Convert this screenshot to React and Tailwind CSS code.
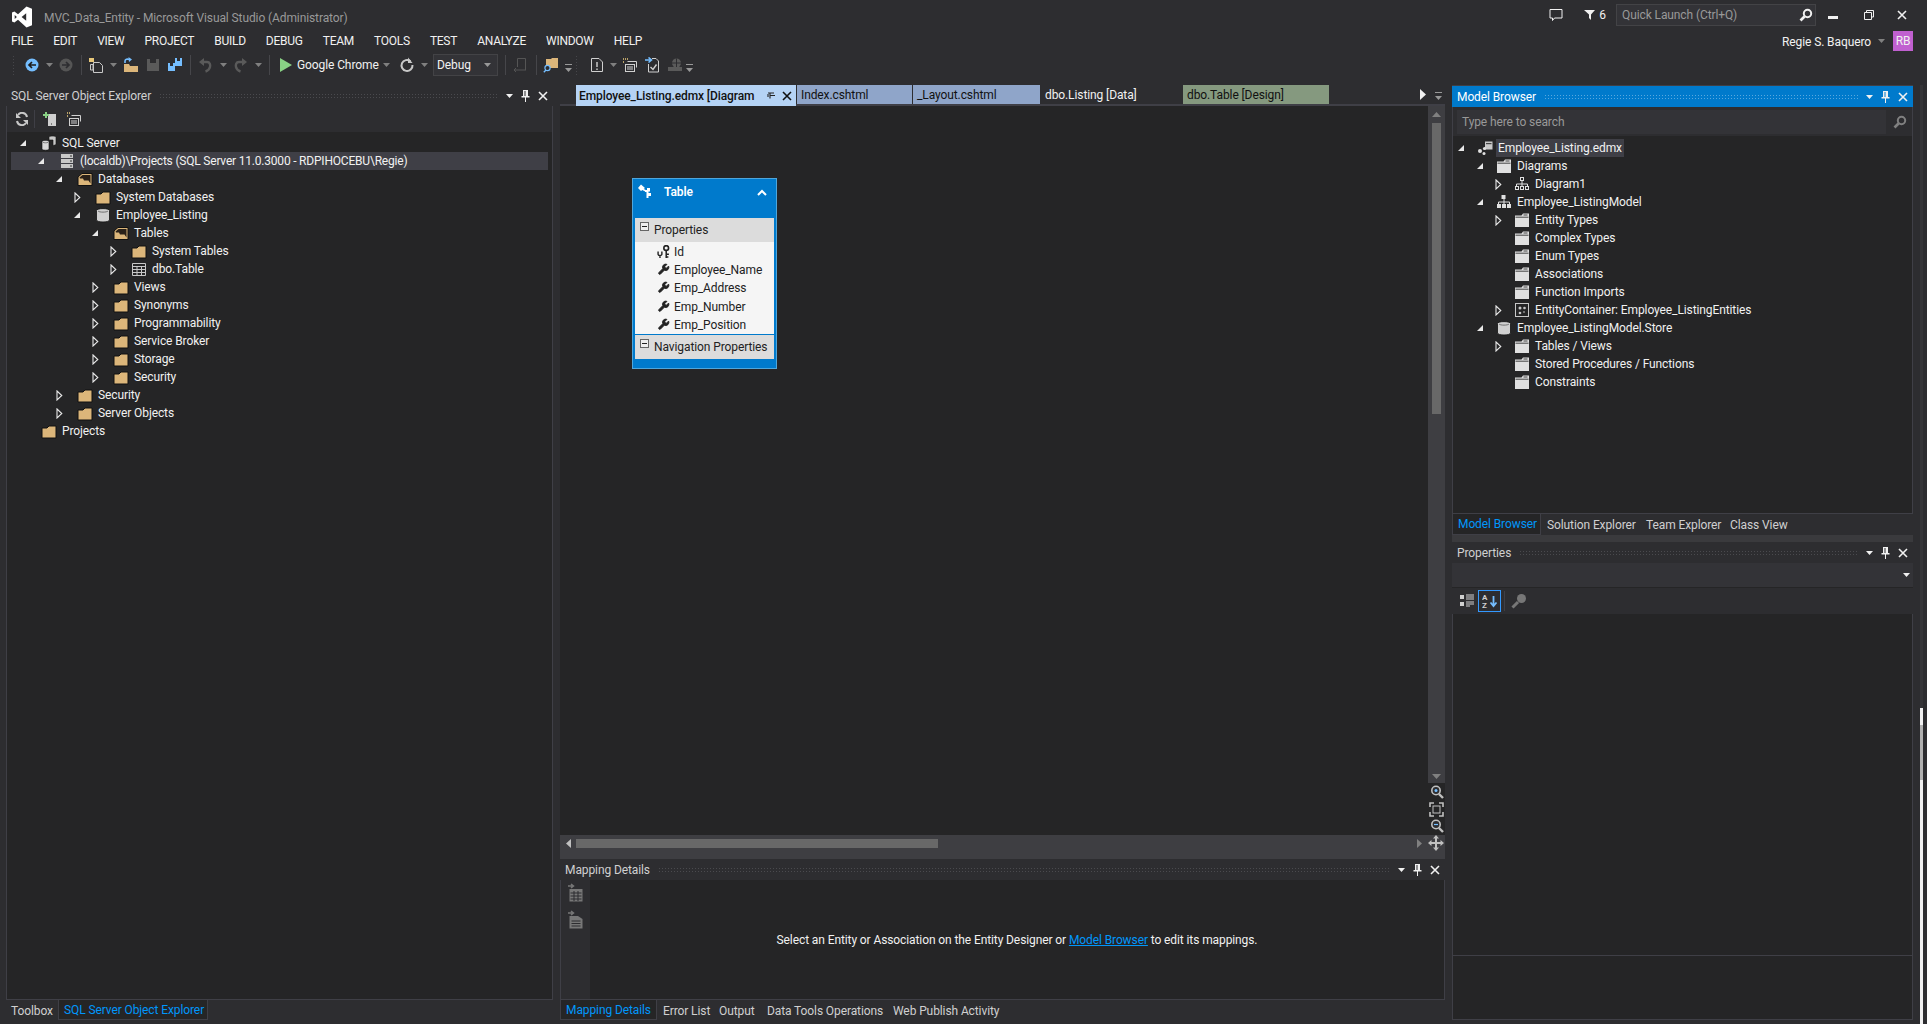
import React from "react";

const Svg = ({ s = 16, h, vb = "0 0 16 16", children, className = "" }) => (
  <svg width={s} height={h || s} viewBox={vb} className={"shrink-0 " + className}>{children}</svg>
);

const VSLogo = () => (
  <Svg s={20} h={22} vb="0 0 20 22">
    <path fillRule="evenodd" fill="#fff" d="M14.5 0.5 L20 2.8 V19.2 L14.5 21.5 L6 13.8 L2.4 16.6 L0 15.4 V6.6 L2.4 5.4 L6 8.2 Z M14.2 7.3 L9.6 11 L14.2 14.7 Z M2.7 9 V13 L4.9 11 Z" />
  </Svg>
);

const Tri = ({ c = "#999999" }) => (
  <Svg s={7} h={4} vb="0 0 7 4"><path d="M0 0H7L3.5 4Z" fill={c} /></Svg>
);
const Overflow = () => (
  <Svg s={7} h={9} vb="0 0 7 9"><path d="M0 0H7V1H0Z M0 4H7L3.5 8Z" fill="#999999" /></Svg>
);
const Pin = ({ c = "#f1f1f1" }) => (
  <Svg s={9} h={13} vb="0 0 9 13"><path d="M2 1H7V7H8.5V8.5H5V13H4V8.5H0.5V7H2Z M3.5 2V7H4.5V2Z" fill={c} fillRule="evenodd" /></Svg>
);
const Close = ({ c = "#f1f1f1", s = 10 }) => (
  <Svg s={s} vb="0 0 10 10"><path d="M1 1L9 9M9 1L1 9" stroke={c} strokeWidth="1.6" /></Svg>
);

const ArrowOpen = () => (
  <Svg s={8} vb="0 0 8 8"><path d="M7 1V7H1Z" fill="#e8e8e8" /></Svg>
);
const ArrowClosed = () => (
  <Svg s={7} h={11} vb="0 0 7 11"><path d="M1 1L5.8 5.5L1 10Z" fill="none" stroke="#e8e8e8" strokeWidth="1.1" /></Svg>
);

const FolderTan = () => (
  <Svg><path d="M1 5H6L8 3H15V15H1Z" fill="#dcb67a" stroke="#111" strokeWidth="1" /></Svg>
);
const FolderOpen = () => (
  <Svg>
    <path d="M1 6L5 2.5H15V14.5H1Z" fill="#dcb67a" stroke="#111" />
    <path d="M2.5 6.5L5.5 4H13.5V12.5L11.5 9.5H7L6 7.5H3Z" fill="#2a2118" />
  </Svg>
);
const FolderWhite = () => (
  <Svg>
    <path d="M1 3.5H7.5L9 1.5H15V15H1Z" fill="#e0e0e0" />
    <path d="M1.5 5.2H14.5" stroke="#333" strokeWidth="0.9" />
    <path d="M9.5 3H13.5" stroke="#333" strokeWidth="0.9" />
  </Svg>
);
const Cylinder = ({ c = "#d0d0d0" }) => (
  <Svg>
    <path d="M1.5 3.5C1.5 1 14.5 1 14.5 3.5V13C14.5 15.6 1.5 15.6 1.5 13Z" fill={c} stroke="#111" strokeWidth="0.8" />
    <path d="M3 4C4 5.5 12 5.5 13 4" fill="none" stroke="#666" strokeWidth="0.9" />
  </Svg>
);
const SqlServer = () => (
  <Svg>
    <path d="M8 2C8 0.8 15 0.8 15 2V9C15 10 13 10.4 12 10.4V5H8Z" fill="#c8c8c8" stroke="#111" strokeWidth="0.6" />
    <path d="M1 6.5C1 5 8 5 8 6.5V14C8 15.6 1 15.6 1 14Z" fill="#d8d8d8" stroke="#111" strokeWidth="0.6" />
    <path d="M2 7.3C3 8 6 8 7 7.3" stroke="#555" fill="none" strokeWidth="0.7" />
  </Svg>
);
const ServerStack = () => (
  <Svg>
    <rect x="2" y="1" width="12" height="4" fill="#c8c8c8" />
    <rect x="2" y="6" width="12" height="4" fill="#c8c8c8" />
    <rect x="2" y="11" width="12" height="4" fill="#c8c8c8" />
    <rect x="11" y="2.5" width="2" height="1" fill="#333" />
    <rect x="11" y="7.5" width="2" height="1" fill="#333" />
    <rect x="11" y="12.5" width="2" height="1" fill="#333" />
  </Svg>
);
const GridTable = () => (
  <Svg>
    <path d="M1.5 2.5H14.5V14.5H1.5Z M1.5 5.5H14.5 M1.5 8.5H14.5 M1.5 11.5H14.5 M6 5.5V14.5 M10.5 5.5V14.5" fill="none" stroke="#c8c8c8" />
  </Svg>
);
const Hier = ({ filled = false }) => (
  <Svg>
    <rect x={filled ? 6 : 6.5} y="1.5" width="3" height="3" fill={filled ? "#e0e0e0" : "none"} stroke="#e0e0e0" />
    <path d="M8 4.5V8M2.5 10.5V8H13.5V10.5M8 8V10.5" fill="none" stroke="#e0e0e0" />
    <rect x="1.5" y="10.5" width="3" height="3" fill={filled ? "#e0e0e0" : "none"} stroke="#e0e0e0" />
    <rect x="6.5" y="10.5" width="3" height="3" fill={filled ? "#e0e0e0" : "none"} stroke="#e0e0e0" />
    <rect x="11.5" y="10.5" width="3" height="3" fill={filled ? "#e0e0e0" : "none"} stroke="#e0e0e0" />
  </Svg>
);
const Edmx = () => (
  <Svg>
    <rect x="8" y="1.5" width="7.5" height="8" fill="#c8c8c8" />
    <rect x="9" y="3" width="5.5" height="1.2" fill="#444" />
    <circle cx="3" cy="11" r="2" fill="#e0e0e0" />
    <circle cx="7.5" cy="8.5" r="1.6" fill="#e0e0e0" />
    <circle cx="7" cy="13.5" r="1.5" fill="#e0e0e0" />
  </Svg>
);
const Container = () => (
  <Svg>
    <rect x="1.5" y="1.5" width="13" height="13" fill="none" stroke="#c8c8c8" />
    <circle cx="6" cy="6" r="1.5" fill="#c8c8c8" />
    <circle cx="10.5" cy="6" r="1.3" fill="#c8c8c8" />
    <circle cx="6" cy="11" r="1.3" fill="#c8c8c8" />
    <circle cx="10" cy="10" r="1.1" fill="#888" />
  </Svg>
);
const Search = ({ c = "#f1f1f1", s = 14 }) => (
  <Svg s={s} vb="0 0 14 14">
    <circle cx="8.5" cy="5.5" r="3.7" fill="none" stroke={c} strokeWidth="2" />
    <path d="M5.5 8.5L1.5 12.5" stroke={c} strokeWidth="2.6" />
  </Svg>
);

const icons = {
  tan: FolderTan, open: FolderOpen, white: FolderWhite, db: Cylinder, sql: SqlServer, server: ServerStack,
  grid: GridTable, hier: Hier, hierF: () => <Hier filled />, edmx: Edmx, cont: Container,
};

const leftTree = [
  { pad: "pl-[7px]", a: "open", i: "sql", t: "SQL Server" },
  { pad: "pl-[25px]", a: "open", i: "server", t: "(localdb)\\Projects (SQL Server 11.0.3000 - RDPIHOCEBU\\Regie)", sel: true },
  { pad: "pl-[43px]", a: "open", i: "open", t: "Databases" },
  { pad: "pl-[61px]", a: "closed", i: "tan", t: "System Databases" },
  { pad: "pl-[61px]", a: "open", i: "db", t: "Employee_Listing" },
  { pad: "pl-[79px]", a: "open", i: "open", t: "Tables" },
  { pad: "pl-[97px]", a: "closed", i: "tan", t: "System Tables" },
  { pad: "pl-[97px]", a: "closed", i: "grid", t: "dbo.Table" },
  { pad: "pl-[79px]", a: "closed", i: "tan", t: "Views" },
  { pad: "pl-[79px]", a: "closed", i: "tan", t: "Synonyms" },
  { pad: "pl-[79px]", a: "closed", i: "tan", t: "Programmability" },
  { pad: "pl-[79px]", a: "closed", i: "tan", t: "Service Broker" },
  { pad: "pl-[79px]", a: "closed", i: "tan", t: "Storage" },
  { pad: "pl-[79px]", a: "closed", i: "tan", t: "Security" },
  { pad: "pl-[43px]", a: "closed", i: "tan", t: "Security" },
  { pad: "pl-[43px]", a: "closed", i: "tan", t: "Server Objects" },
  { pad: "pl-[7px]", i: "tan", t: "Projects" },
];

const rightTree = [
  { pad: "pl-[3px]", a: "open", i: "edmx", t: "Employee_Listing.edmx", sel: true },
  { pad: "pl-[22px]", a: "open", i: "white", t: "Diagrams" },
  { pad: "pl-[40px]", a: "closed", i: "hier", t: "Diagram1" },
  { pad: "pl-[22px]", a: "open", i: "hierF", t: "Employee_ListingModel" },
  { pad: "pl-[40px]", a: "closed", i: "white", t: "Entity Types" },
  { pad: "pl-[40px]", i: "white", t: "Complex Types" },
  { pad: "pl-[40px]", i: "white", t: "Enum Types" },
  { pad: "pl-[40px]", i: "white", t: "Associations" },
  { pad: "pl-[40px]", i: "white", t: "Function Imports" },
  { pad: "pl-[40px]", a: "closed", i: "cont", t: "EntityContainer: Employee_ListingEntities" },
  { pad: "pl-[22px]", a: "open", i: "db", t: "Employee_ListingModel.Store" },
  { pad: "pl-[40px]", a: "closed", i: "white", t: "Tables / Views" },
  { pad: "pl-[40px]", i: "white", t: "Stored Procedures / Functions" },
  { pad: "pl-[40px]", i: "white", t: "Constraints" },
];

const Row = ({ r, gapL, gapT }) => {
  const I = icons[r.i];
  const isLeft = gapL === "ml-[13px]";
  return (
    <div className={"flex items-center h-[18px] " + r.pad + (r.sel && isLeft ? " bg-[#3f3f46]" : "")}>
      <div className="w-[10px] flex justify-center">
        {r.a === "open" ? <ArrowOpen /> : r.a === "closed" ? <ArrowClosed /> : null}
      </div>
      <div className={gapL}><I /></div>
      <span className={gapT + " px-[2px] h-[18px] leading-[18px] whitespace-nowrap " + (r.sel && !isLeft ? "bg-[#3f3f46]" : "") + (r.sel && isLeft ? "tracking-[-0.2px]" : "")}>{r.t}</span>
    </div>
  );
};

const PanelHead = ({ title, active }) => (
  <div className={"h-[21px] flex items-center shrink-0 pl-[5px] pr-[5px] " + (active ? "bg-[#007acc] text-white" : "bg-[#2d2d30] text-[#d0d0d0]")}>
    <span className="whitespace-nowrap pt-px">{title}</span>
    <div className={"flex-1 h-[5px] mx-[8px] bg-[length:3px_3px] " + (active ? "bg-[radial-gradient(#59a8de_1px,transparent_1px)]" : "bg-[radial-gradient(#4a4a4e_1px,transparent_1px)]")} />
    <div className="flex items-center gap-[8px]">
      <Tri c="#f1f1f1" />
      <Pin />
      <Close />
    </div>
  </div>
);

const ToolSep = ({ c = "w-[14px]" }) => (
  <div className={c + " flex justify-center"}><div className="w-px h-[20px] bg-[#46464a]" /></div>
);
const Grip = () => <div className="w-[4px] h-[20px] bg-[radial-gradient(#46464a_1px,transparent_1px)] bg-[length:3px_3px]" />;
const DD = ({ c = "w-[18px]" }) => <div className={c + " flex justify-center"}><Tri c="#808080" /></div>;

const Toolbar = () => (
  <div className="h-[26px] flex items-center pl-[12px] shrink-0 mb-[7px]">
    <div className="w-[12px]"><Grip /></div>
    <Svg><circle cx="8" cy="8" r="6.5" fill="#75beff" /><path d="M12 8H5M8 5L5 8L8 11" stroke="#1e1e1e" strokeWidth="1.7" fill="none" /></Svg>
    <DD />
    <Svg><circle cx="8" cy="8" r="6.5" fill="#555" /><path d="M4 8H11M8 5L11 8L8 11" stroke="#2d2d30" strokeWidth="1.7" fill="none" /></Svg>
    <ToolSep />
    <Svg>
      <path d="M5.5 5.5H11.5L14.5 8.5V15.5H5.5Z" fill="none" stroke="#c8c8c8" />
      <path d="M2.5 7.5H5V13H2.5Z" fill="none" stroke="#c8c8c8" />
      <rect x="1" y="1" width="5" height="4" fill="#e8c87a" />
    </Svg>
    <DD c="w-[19px]" />
    <Svg>
      <path d="M1 7H6L7 9H15V15H1Z" fill="#dcb67a" />
      <path d="M2 6V4C2 2.5 4 1.5 7 2.5" fill="none" stroke="#75beff" strokeWidth="1.6" />
      <path d="M5.5 0L9 2.5L6 5Z" fill="#75beff" />
    </Svg>
    <div className="w-[6px]" />
    <Svg><path d="M2 2H5V6H11V2H14V14H2Z" fill="#5a5a5a" /></Svg>
    <div className="w-[6px]" />
    <Svg>
      <path d="M8 1H15V9H8Z" fill="#75beff" />
      <path d="M1 6H8V14H1Z" fill="#75beff" />
      <rect x="10" y="1" width="3" height="3" fill="#2d2d30" />
      <rect x="3" y="6" width="3" height="3" fill="#2d2d30" />
    </Svg>
    <ToolSep c="w-[14px]" />
    <Svg><path d="M6 5H10C13 5 13.5 8 13 10C12.5 12 10 14 8.5 14.5" fill="none" stroke="#5a5a5a" strokeWidth="2.4" /><path d="M2 5L7 1V9Z" fill="#5a5a5a" /></Svg>
    <DD c="w-[20px]" />
    <Svg><path d="M10 5H6C3 5 2.5 8 3 10C3.5 12 6 14 7.5 14.5" fill="none" stroke="#5a5a5a" strokeWidth="2.4" /><path d="M14 5L9 1V9Z" fill="#5a5a5a" /></Svg>
    <DD c="w-[19px]" />
    <ToolSep c="w-[2px]" />
    <div className="w-[8px]" />
    <Svg vb="0 0 16 16"><path d="M2 1L14 8L2 15Z" fill="#89d185" /></Svg>
    <span className="ml-[3px] text-[#f1f1f1] w-[84px] whitespace-nowrap">Google Chrome</span>
    <DD c="w-[10px]" />
    <div className="w-[8px]" />
    <Svg><path d="M11.5 4.2A5.5 5.5 0 1 0 13.5 8" fill="none" stroke="#c8c8c8" strokeWidth="2" /><path d="M9 0.5V6H13.5Z" fill="#c8c8c8" /></Svg>
    <DD c="w-[18px]" />
    <div className="w-[65px] h-[22px] bg-[#333337] border border-[#434346] flex items-center justify-between pl-[3px] pr-[6px] text-[#f1f1f1]">
      Debug <Tri c="#999999" />
    </div>
    <ToolSep c="w-[14px]" />
    <Svg><path d="M5.5 1.5H13.5V13M5.5 1.5V10" fill="none" stroke="#555" /><path d="M2 13H14M2 13L4 11M2 13L4 15" fill="none" stroke="#555" /></Svg>
    <div className="w-[7px]" />
    <ToolSep c="w-[2px]" />
    <div className="w-[6px]" />
    <Svg>
      <path d="M3 2H8L9 1H15V11H3Z" fill="#dcb67a" />
      <circle cx="4.5" cy="11" r="2.6" fill="#2d2d30" stroke="#75beff" strokeWidth="1.2" />
      <path d="M3 13L0.8 15.2" stroke="#75beff" strokeWidth="1.4" />
    </Svg>
    <div className="w-[7px] ml-[6px] flex items-end h-[16px]"><Overflow /></div>
    <div className="w-[3px]" />
    <Grip />
    <div className="w-[10px]" />
    <Svg><path d="M2.5 1.5H10L13.5 5V14.5H2.5Z" fill="none" stroke="#d0d0d0" /><path d="M8 5V10M8 11.5V13" stroke="#d0d0d0" strokeWidth="1.4" /></Svg>
    <DD c="w-[17px]" />
    <Svg>
      <path d="M1 2H6M1 5H3" stroke="#e8c87a" strokeWidth="1.6" strokeDasharray="1 1" />
      <path d="M5.5 4.5H14.5V10.5" fill="none" stroke="#d0d0d0" />
      <rect x="3.5" y="7.5" width="9" height="7" fill="none" stroke="#d0d0d0" />
      <path d="M5 10H11M5 12H11" stroke="#d0d0d0" />
    </Svg>
    <div className="w-[6px]" />
    <Svg>
      <path d="M1 3H7M4.5 0.5L7.5 3L4.5 5.5" stroke="#75beff" strokeWidth="1.6" fill="none" />
      <path d="M8 1.5H12L14.5 4V15H4.5V7" fill="none" stroke="#d0d0d0" />
      <path d="M6.5 10L9 12.5L12.5 7.5" fill="none" stroke="#d0d0d0" strokeWidth="1.4" />
    </Svg>
    <div className="w-[7px]" />
    <Svg>
      <circle cx="9.5" cy="6" r="4.5" fill="#5a5a5a" />
      <rect x="1" y="10" width="14" height="4" fill="#5a5a5a" />
      <path d="M9.5 1.5V10M5 6H14" stroke="#2d2d30" />
    </Svg>
    <div className="w-[10px] flex items-end h-[16px] justify-end"><Overflow /></div>
  </div>
);

const Wrench = ({ s = 13 }) => (
  <Svg s={s} vb="0 0 24 24">
    <path fill="#222" stroke="#222" strokeWidth="1.5" d="M14.7 6.3a1 1 0 0 0 0 1.4l1.6 1.6a1 1 0 0 0 1.4 0l3.77-3.77a6 6 0 0 1-7.94 7.94l-6.91 6.91a2.12 2.12 0 0 1-3-3l6.91-6.91a6 6 0 0 1 7.94-7.94l-3.76 3.76z" />
  </Svg>
);
const KeyIcon = () => (
  <Svg s={13} vb="0 0 12 12">
    <circle cx="8.5" cy="2.8" r="2.2" fill="none" stroke="#222" strokeWidth="1.5" />
    <path d="M8.5 5V12M8.5 8.5H11M8.5 11H10.5" stroke="#222" strokeWidth="1.4" />
    <path d="M1 6V8.5C1 10 4.5 10 4.5 8.5V6M2.75 9.5V12" stroke="#222" strokeWidth="1.3" fill="none" />
  </Svg>
);
const MinusBox = () => (
  <div className="w-[9px] h-[9px] border border-[#666] bg-[#eee] flex items-center justify-center shrink-0">
    <div className="w-[5px] h-px bg-[#222]" />
  </div>
);

const EntityCard = () => (
  <div className="absolute left-[72px] top-[72px] w-[145px] h-[191px] border border-[#4ea6dc] bg-[#007acc] text-[#222]">
    <div className="h-[39px] flex items-start pt-[4px] pl-[5px] pr-[9px] text-white font-semibold">
      <Svg s={15} vb="0 0 15 15">
        <path d="M0 5L3 1.5L7 5L3 8Z M7 7H9V5H12V8.5H10.5V10H13V13H10.5V15H8.5V9H7Z" fill="#fff" />
        <path d="M3 5.5L8 8" stroke="#fff" strokeWidth="1.4" />
      </Svg>
      <span className="ml-[11px] flex-1 leading-[18px]">Table</span>
      <Svg s={10} vb="0 0 10 10" className="mt-[5px]"><path d="M1 7L5 3L9 7" stroke="#fff" strokeWidth="2" fill="none" /></Svg>
    </div>
    <div className="mx-[2px] bg-[#dcdcdc] h-[24px] flex items-start pl-[5px]">
      <div className="mt-[4px]"><MinusBox /></div>
      <span className="ml-[5px] leading-[24px]">Properties</span>
    </div>
    <div className="mx-[2px] bg-[#f5f5f5] h-[92px]">
      {[["Id", true], ["Employee_Name"], ["Emp_Address"], ["Emp_Number"], ["Emp_Position"]].map(([t, k]) => (
        <div key={t} className="h-[18.4px] flex items-center pl-[22px]">
          {k ? <KeyIcon /> : <Wrench />}
          <span className="ml-[4px] pt-px">{t}</span>
        </div>
      ))}
    </div>
    <div className="h-px" />
    <div className="mx-[2px] bg-[#dcdcdc] h-[24px] flex items-start pl-[5px]">
      <div className="mt-[4px]"><MinusBox /></div>
      <span className="ml-[5px] leading-[24px] whitespace-nowrap">Navigation Properties</span>
    </div>
  </div>
);

const BottomTab = ({ t, active, c = "" }) => (
  <div className={"h-[20px] whitespace-nowrap " + c + (active ? " leading-[20px] text-[#0097fb] bg-[#252526] border-x border-b border-[#3f3f46]" : " leading-[22px] text-[#d0d0d0]")}>{t}</div>
);

const TableIconSmall = () => (
  <Svg s={16} h={20} vb="0 0 16 20">
    <path d="M0 3H5M3 1L5.5 3L3 5" stroke="#777" strokeWidth="1.5" fill="none" />
    <rect x="1.5" y="6" width="13" height="12.5" fill="#777" />
    <path d="M2.5 10H13.5M2.5 13H13.5M2.5 16H13.5M6 8V18M10 8V18" stroke="#2d2d30" />
  </Svg>
);
const ListIconSmall = () => (
  <Svg s={16} h={20} vb="0 0 16 20">
    <path d="M0 3H5M3 1L5.5 3L3 5" stroke="#777" strokeWidth="1.5" fill="none" />
    <path d="M1.5 6H10L14.5 9V18.5H1.5Z" fill="#777" />
    <path d="M3.5 11H12.5M3.5 13.5H12.5M3.5 16H12.5" stroke="#2d2d30" />
  </Svg>
);

export default function App() {
  return (
    <div className="w-[1927px] h-[1024px] overflow-hidden bg-[#2d2d30] flex flex-col text-[12px] leading-[16px] tracking-[-0.1px] text-[#f1f1f1] font-[family-name:'Roboto',sans-serif]">
      {/* title */}
      <div className="h-[30px] flex items-center shrink-0 pl-[12px]">
        <div className="mt-[4px]"><VSLogo /></div>
        <span className="ml-[12px] mt-[6px] text-[#999999] whitespace-nowrap">MVC_Data_Entity - Microsoft Visual Studio (Administrator)</span>
        <div className="ml-auto flex items-center">
          <Svg s={14} vb="0 0 14 14"><path d="M1 1.5H13V10H5.5L3.5 12.5V10H1Z" fill="none" stroke="#f1f1f1" /></Svg>
          <div className="ml-[21px] flex items-center text-[#f1f1f1]">
            <Svg s={12} vb="0 0 12 12"><path d="M0 1H11L7 5.5V11L5 9V5.5Z" fill="#f1f1f1" /></Svg>
            <span className="ml-[3px]">6</span>
          </div>
          <div className="ml-[10px] w-[200px] h-[22px] bg-[#333337] border border-[#434346] flex items-center justify-between pl-[5px] pr-[2px] text-[#999999]">
            Quick Launch (Ctrl+Q) <Search />
          </div>
          <div className="w-[111px] flex items-center">
            <div className="ml-[12px] w-[10px] h-[3px] bg-[#f1f1f1] mt-[5px]" />
            <Svg s={10} vb="0 0 10 10" className="ml-[26px]"><path d="M2.5 2.5V0.5H9.5V7H7.5M0.5 2.5H7.5V9.5H0.5Z" fill="none" stroke="#f1f1f1" /></Svg>
            <div className="ml-[23px]"><Close /></div>
          </div>
        </div>
      </div>
      {/* menu */}
      <div className="h-[22px] flex items-center shrink-0 pl-[1px] pr-[14px]">
        {["FILE", "EDIT", "VIEW", "PROJECT", "BUILD", "DEBUG", "TEAM", "TOOLS", "TEST", "ANALYZE", "WINDOW", "HELP"].map((m) => (
          <span key={m} className="px-[10px] text-[#f1f1f1] tracking-[-0.25px]">{m}</span>
        ))}
        <div className="ml-auto flex items-center">
          <span className="pt-px">Regie S. Baquero</span>
          <div className="ml-[7px]"><Tri c="#808080" /></div>
          <div className="ml-[8px] w-[20px] h-[20px] bg-[#c060d0] flex items-center justify-center text-[#f1f1f1]">RB</div>
        </div>
      </div>
      <Toolbar />

      {/* main */}
      <div className="flex-1 flex pl-[6px] min-h-0 pb-[4px]">
        {/* left */}
        <div className="w-[547px] flex flex-col shrink-0">
          <PanelHead title="SQL Server Object Explorer" />
          <div className="h-[26px] flex items-center pl-[8px] border-x border-[#3f3f46] shrink-0 gap-[5px]">
            <Svg s={14} vb="0 0 14 14"><path d="M12 5A5 5 0 0 0 3 3M2 9A5 5 0 0 0 11 11" fill="none" stroke="#c8c8c8" strokeWidth="2" /><path d="M1 1V6H6Z M13 13V8H8Z" fill="#c8c8c8" /></Svg>
            <div className="w-px h-[18px] bg-[#3f3f46]" />
            <div className="ml-[2px]"><Svg>
              <path d="M6 3H14V15H6Z" fill="#d0d0d0" /><path d="M9 13H10" stroke="#333" />
              <path d="M1 4H7M4 1V7" stroke="#89d185" strokeWidth="2" />
            </Svg></div>
            <div className="ml-[3px]"><Svg>
              <path d="M1 2H5M1 5H3" stroke="#e8c87a" strokeWidth="1.6" strokeDasharray="1 1" />
              <path d="M5.5 4.5H14.5V10.5" fill="none" stroke="#d0d0d0" />
              <rect x="3.5" y="7.5" width="9" height="7" fill="none" stroke="#d0d0d0" />
              <path d="M5 10H11M5 12H11" stroke="#d0d0d0" />
            </Svg></div>
          </div>
          <div className="flex-1 bg-[#252526] border border-[#3f3f46] border-t-0 px-[4px] pt-[2px]">
            {leftTree.map((r, i) => <Row key={i} r={r} gapL="ml-[13px]" gapT="ml-[3px]" />)}
          </div>
          <div className="h-[20px] flex shrink-0">
            <BottomTab t="Toolbox" c="pl-[5px] w-[52px]" />
            <BottomTab t="SQL Server Object Explorer" active c="pl-[5px] w-[150px]" />
          </div>
        </div>

        {/* center */}
        <div className="w-[885px] ml-[7px] flex flex-col shrink-0">
          <div className="h-[21px] flex shrink-0 border-b-2 border-[#3f3f46] pl-[16px] relative">
            <div className="w-[220px] h-[21px] bg-[#b5d3f5] text-[#111] font-medium flex items-center pl-[3px] pr-[4px] z-10">
              <span className="w-[177px] overflow-hidden whitespace-nowrap">Employee_Listing.edmx [Diagram1]</span>
              <div className="ml-[12px]"><Svg s={9} vb="0 0 9 9"><path d="M3 1.5V7.5M3 4.5H8M1 3V6M1 2H7" stroke="#222" strokeWidth="1.1" fill="none" /></Svg></div>
              <div className="ml-[6px]"><Close c="#111" /></div>
            </div>
            <div className="w-[115px] h-[19px] ml-px bg-[#8fa5c9] text-[#111] pl-[4px] leading-[21px]">Index.cshtml</div>
            <div className="w-[127px] h-[19px] ml-px bg-[#8fa5c9] text-[#111] pl-[4px] leading-[21px]">_Layout.cshtml</div>
            <div className="w-[143px] h-[19px] text-[#f1f1f1] pl-[5px] leading-[21px]">dbo.Listing [Data]</div>
            <div className="w-[146px] h-[19px] bg-[#85997f] text-[#111] pl-[4px] leading-[21px]">dbo.Table [Design]</div>
            <div className="ml-auto flex items-start pt-[4px] pr-[3px] gap-[9px]">
              <Svg s={6} h={11} vb="0 0 6 11"><path d="M0 0L6 5.5L0 11Z" fill="#f1f1f1" /></Svg>
              <div className="mt-[3px]"><Overflow /></div>
            </div>
          </div>
          {/* canvas + vscroll */}
          <div className="flex-1 flex min-h-0">
            <div className="flex-1 bg-[#252526] relative">
              <EntityCard />
            </div>
            <div className="w-[17px] flex flex-col shrink-0">
              <div className="flex-1 bg-[#3e3e42] flex flex-col items-center">
                <div className="h-[17px] flex items-center justify-center"><Svg s={9} h={5} vb="0 0 9 5"><path d="M0 5L4.5 0L9 5Z" fill="#808080" /></Svg></div>
                <div className="w-[9px] h-[291px] bg-[#686868]" />
                <div className="mt-auto h-[14px] flex items-center justify-center"><Svg s={9} h={5} vb="0 0 9 5"><path d="M0 0H9L4.5 5Z" fill="#808080" /></Svg></div>
              </div>
              <div className="h-[52px] bg-[#252526] flex flex-col items-center justify-between py-[2px] shrink-0">
                <Svg s={14} vb="0 0 14 14"><circle cx="6" cy="5.5" r="4.2" fill="#2d2d30" stroke="#c0c0c0" strokeWidth="1.6" /><path d="M9 9L13 13" stroke="#c0c0c0" strokeWidth="2.4" /><circle cx="6" cy="5.5" r="1.5" fill="#75beff" /></Svg>
                <Svg s={15} vb="0 0 15 15"><path d="M1 5V1H5M10 1H14V5M14 10V14H10M5 14H1V10" fill="none" stroke="#c0c0c0" strokeWidth="1.6" /><rect x="4" y="4" width="7" height="7" fill="none" stroke="#c0c0c0" /></Svg>
                <Svg s={14} vb="0 0 14 14"><circle cx="6" cy="5.5" r="4.2" fill="#2d2d30" stroke="#c0c0c0" strokeWidth="1.6" /><path d="M9 9L13 13" stroke="#c0c0c0" strokeWidth="2.4" /><path d="M4 5.5H8" stroke="#75beff" strokeWidth="1.2" /></Svg>
              </div>
            </div>
          </div>
          {/* hscroll */}
          <div className="h-[24px] bg-[#3e3e42] shrink-0 flex items-start">
            <div className="h-[16px] flex items-center w-full">
              <div className="w-[16px] flex justify-center"><Svg s={5} h={9} vb="0 0 5 9"><path d="M5 0V9L0 4.5Z" fill="#c0c0c0" /></Svg></div>
              <div className="w-[362px] h-[9px] bg-[#686868]" />
              <div className="ml-auto mr-[6px]"><Svg s={5} h={9} vb="0 0 5 9"><path d="M0 0V9L5 4.5Z" fill="#808080" /></Svg></div>
              <div className="mr-px"><Svg s={16} vb="0 0 16 16"><path d="M8 0L11 3.5H9V7H12.5V5L16 8L12.5 11V9H9V12.5H11L8 16L5 12.5H7V9H3.5V11L0 8L3.5 5V7H7V3.5H5Z" fill="#c0c0c0" /></Svg></div>
            </div>
          </div>
          <PanelHead title="Mapping Details" />
          <div className="h-[120px] flex bg-[#252526] border-x border-[#3f3f46] border-b shrink-0">
            <div className="w-[29px] bg-[#2d2d30] flex flex-col items-center pt-[3px] gap-[7px] shrink-0">
              <TableIconSmall />
              <ListIconSmall />
            </div>
            <div className="flex-1 flex items-center justify-center">
              <span>Select an Entity or Association on the Entity Designer or <span className="text-[#0097fb] underline">Model Browser</span> to edit its mappings.</span>
            </div>
          </div>
          <div className="h-[20px] flex shrink-0">
            <BottomTab t="Mapping Details" active c="pl-[5px] w-[97px]" />
            <BottomTab t="Error List" c="pl-[6px] w-[62px]" />
            <BottomTab t="Output" c="w-[48px]" />
            <BottomTab t="Data Tools Operations" c="w-[126px]" />
            <BottomTab t="Web Publish Activity" />
          </div>
        </div>

        {/* right */}
        <div className="w-[461px] ml-[7px] flex flex-col shrink-0">
          <div className="h-px bg-[#3f3f46] shrink-0" />
          <PanelHead title="Model Browser" active />
          <div className="h-[29px] flex items-center pl-[4px] border-x border-[#3f3f46] shrink-0">
            <div className="w-[429px] h-[24px] bg-[#333337] pl-[5px] leading-[25px] text-[#999999]">Type here to search</div>
            <div className="ml-[7px]"><Search c="#808080" s={14} /></div>
          </div>
          <div className="h-[378px] bg-[#252526] border border-t-0 border-[#3f3f46] pt-[3px] shrink-0">
            {rightTree.map((r, i) => <Row key={i} r={r} gapL="ml-[11px]" gapT="ml-[3px]" />)}
          </div>
          <div className="h-[21px] flex shrink-0">
            <BottomTab t="Model Browser" active c="w-[89px] pl-[5px] h-[21px]" />
            <BottomTab t="Solution Explorer" c="pl-[6px] w-[105px]" />
            <BottomTab t="Team Explorer" c="w-[84px]" />
            <BottomTab t="Class View" />
          </div>
          <div className="h-[7px] bg-[#3a3a3d] shrink-0" />
          <PanelHead title="Properties" />
          <div className="h-[25px] bg-[#333337] border-b border-[#252526] flex items-center justify-end pr-[3px] shrink-0"><Tri c="#f1f1f1" /></div>
          <div className="h-[26px] flex items-center pl-[7px] shrink-0">
            <Svg>
              <path d="M1 2H5V6H1Z M1 9H5V13H1Z" fill="#d0d0d0" />
              <path d="M7 2H15M7 4H15M7 6H15M7 9H15M7 11H15M7 13H11" stroke="#d0d0d0" />
            </Svg>
            <div className="ml-[3px] w-[23px] h-[22px] border border-[#3399ff] flex items-center justify-center">
              <Svg>
                <text x="0" y="7" fontSize="8" fontWeight="700" fill="#d0d0d0">A</text>
                <text x="0" y="15" fontSize="8" fontWeight="700" fill="#d0d0d0">Z</text>
                <path d="M11.5 3V12M8.5 9.5L11.5 13L14.5 9.5" stroke="#75beff" strokeWidth="1.8" fill="none" />
              </Svg>
            </div>
            <div className="ml-[3px] w-px h-[20px] bg-[#3f3f46]" />
            <div className="ml-[6px]"><Svg>
              <circle cx="10.5" cy="5.5" r="4.5" fill="#777" />
              <path d="M7 9L1.5 14.5" stroke="#777" strokeWidth="3" />
            </Svg></div>
          </div>
          <div className="flex-1 flex flex-col bg-[#252526] border-x border-b border-[#3f3f46]">
            <div className="flex-1 border-b border-[#3f3f46]" />
            <div className="h-[63px]" />
          </div>
        </div>

        {/* window behind, at the edge */}
        <div className="w-[7px] shrink-0" />
        <div className="w-[3px] -mb-[4px] shrink-0 flex flex-col justify-end bg-[#353538]">
          <div className="h-[316px] bg-[#f0f0f0]">
            <div className="mt-[17px] h-[55px] bg-[#b0b0b0]" />
          </div>
        </div>
      </div>
    </div>
  );
}
